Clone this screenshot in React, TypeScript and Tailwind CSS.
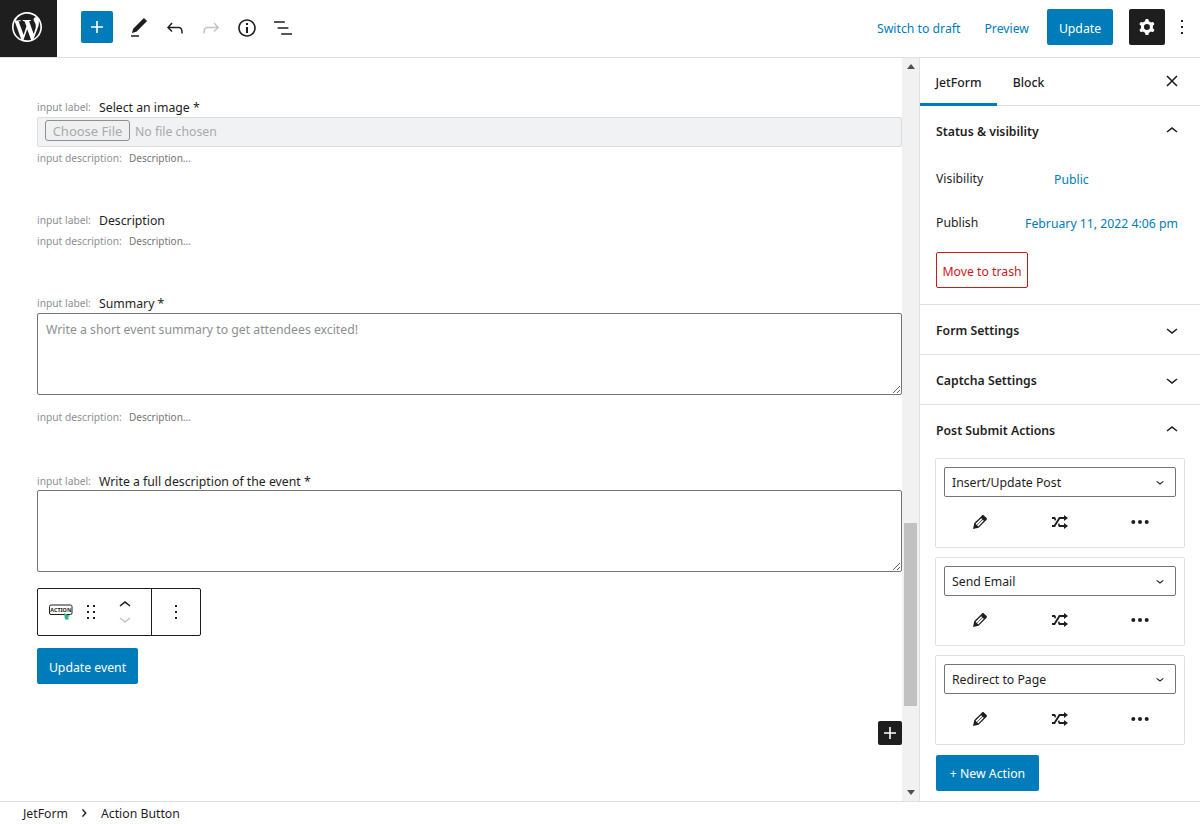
import React from "react";

const P = {
  plus: "M18 11.2h-5.2V6h-1.6v5.2H6v1.6h5.2V18h1.6v-5.2H18z",
  undo: "M18.3 11.7c-.6-.6-1.4-.9-2.3-.9H6.7l2.9-3.3-1.1-1-4.5 5L8.5 16l1-1-2.7-2.7H16c.5 0 .9.2 1.3.5 1 1 1 3.4 1 4.5v.3h1.5v-.2c0-1.5 0-4.3-1.5-5.7z",
  redo: "M15.6 6.5l-1.1 1 2.9 3.3H8c-.9 0-1.7.3-2.3.9-1.4 1.5-1.4 4.2-1.4 5.6v.2h1.5v-.3c0-1.1 0-3.5 1-4.5.3-.3.7-.5 1.3-.5h9.2L14.5 15l1.1 1.1 4.6-4.6-4.6-5z",
  info: "M12 3.2c-4.8 0-8.8 3.9-8.8 8.8 0 4.8 3.9 8.8 8.8 8.8 4.8 0 8.8-3.9 8.8-8.8 0-4.8-4-8.8-8.8-8.8zm0 16c-4 0-7.2-3.3-7.2-7.2C4.8 8 8 4.8 12 4.8s7.2 3.3 7.2 7.2c0 4-3.2 7.2-7.2 7.2zM11 17h2v-6h-2v6zm0-8h2V7h-2v2z",
  list: "M13.8 5.2H3v1.5h10.8V5.2zm-3.6 12v1.5H21v-1.5H10.2zm7.2-6H6.6v1.5h10.8v-1.5z",
  pen: "M20.1 5.1L16.9 2 6.2 12.7l-1.3 4.4 4.5-1.3L20.1 5.1zM4 20.8h8v-1.5H4v1.5z",
  cog: "M10.289 4.836A1 1 0 0111.275 4h1.306a1 1 0 01.987.836l.244 1.466c.787.26 1.503.679 2.108 1.218l1.393-.522a1 1 0 011.216.437l.653 1.13a1 1 0 01-.23 1.273l-1.148.944a6.025 6.025 0 010 2.435l1.149.946a1 1 0 01.23 1.272l-.653 1.13a1 1 0 01-1.216.437l-1.394-.522c-.605.54-1.32.958-2.108 1.218l-.244 1.466a1 1 0 01-.987.836h-1.306a1 1 0 01-.986-.836l-.244-1.466a5.995 5.995 0 01-2.108-1.218l-1.394.522a1 1 0 01-1.217-.436l-.653-1.131a1 1 0 01.23-1.272l1.149-.946a6.026 6.026 0 010-2.435l-1.148-.944a1 1 0 01-.23-1.272l.653-1.131a1 1 0 011.217-.437l1.393.522a5.994 5.994 0 012.108-1.218l.244-1.466zM14.929 12a3 3 0 11-6 0 3 3 0 016 0z",
  more: "M13 19h-2v-2h2v2zm0-6h-2v-2h2v2zm0-6h-2V5h2v2z",
  up: "M6.5 12.4L12 8l5.5 4.4-.9 1.2L12 10l-4.5 3.6-1-1.2z",
  down: "M17.5 11.6L12 16l-5.5-4.4.9-1.2L12 14l4.5-3.6 1 1.2z",
  drag: "M8 7h2V5H8v2zm0 6h2v-2H8v2zm0 6h2v-2H8v2zm6-14v2h2V5h-2zm0 8h2v-2h-2v2zm0 6h2v-2h-2v2z",
};

const WP = "M20 10c0-5.51-4.49-10-10-10C4.48 0 0 4.49 0 10c0 5.52 4.48 10 10 10 5.51 0 10-4.48 10-10zM7.78 15.37L4.37 6.22c.55-.02 1.17-.08 1.17-.08.5-.06.44-.67-.06-.64 0 0-1.45.11-2.37.11-.18 0-.37 0-.58-.01C4.12 2.69 6.87 1.11 10 1.11c2.33 0 4.45.87 6.05 2.34-.68-.11-1.65.39-1.65 1.58 0 .74.45 1.36.9 2.1.35.61.55 1.36.55 2.46 0 1.49-1.4 5-1.4 5l-3.03-8.37c.54-.02.82-.17.82-.17.5-.05.44-.79-.06-.76 0 0-1.44.12-2.38.12-.87 0-2.33-.12-2.33-.12-.5-.03-.56.73-.06.76l.92.08 1.26 3.41zM17.41 10c.24-.64.74-1.87.43-4.25.7 1.29 1.05 2.71 1.05 4.25 0 3.29-1.73 6.24-4.4 7.78.97-2.59 1.94-5.2 2.92-7.78zM6.1 18.09C3.12 16.65 1.11 13.53 1.11 10c0-1.3.23-2.48.72-3.59C3.25 10.3 4.67 14.2 6.1 18.09zm4.03-6.63l2.58 6.98c-.86.29-1.76.45-2.71.45-.79 0-1.57-.11-2.29-.33.81-2.38 1.62-4.74 2.42-7.1z";

function Icon({ d, className = "", size = 24 }: { d: string; className?: string; size?: number }) {
  return (
    <svg viewBox="0 0 24 24" width={size} height={size} className={"fill-current shrink-0 " + className}>
      <path d={d} fillRule="evenodd" clipRule="evenodd" />
    </svg>
  );
}

function Label({ text }: { text: string }) {
  return (
    <div className="flex items-center h-5 pt-[1px]">
      <span className="text-[10.25px] text-[#8c8f94] w-[62px]">input label:</span>
      <span className="text-[12.25px] text-[#1e1e1e] pt-[2px]">{text}</span>
    </div>
  );
}

function Desc() {
  return (
    <div className="flex items-center h-5 pt-[1px]">
      <span className="text-[10.25px] text-[#8c8f94] w-[92px]">input description:</span>
      <span className="text-[10px] text-[#757575]">Description...</span>
    </div>
  );
}

function Panel({ title, open, children }: { title: string; open?: boolean; children?: React.ReactNode }) {
  return (
    <div className="border-b border-[#e0e0e0]">
      <div className="flex items-center justify-between h-[49px] pl-4 pr-4">
        <span className="text-[12.25px] font-semibold text-[#1e1e1e] pt-[3px]">{title}</span>
        <Icon d={open ? P.up : P.down} className="text-[#1e1e1e]" />
      </div>
      {children}
    </div>
  );
}

function ActionCard({ name, compact }: { name: string; compact?: boolean }) {
  return (
    <div className={"border border-[#e0e0e0] rounded-[2px] px-2 pt-2 mb-[9px] " + (compact ? "h-[89px]" : "h-[90px]")}>
      <div className="h-[30px] border border-[#757575] rounded-[2px] flex items-center justify-between pl-[7px] pr-[7px] text-[12.25px] text-[#1e1e1e]">
        <span className="pt-[2px]">{name}</span>
        <Icon d={P.down} size={16} />
      </div>
      <div className={"flex justify-center gap-[60px] items-center h-[20px] text-[#1e1e1e] " + (compact ? "mt-[14px]" : "mt-[15px]")}>
        <svg viewBox="0 0 20 20" width="20" height="20" className="fill-current">
          <path d="M13.89 3.39l2.71 2.72c.46.46.42 1.24.03 1.64l-8.01 8.02-5.56 1.16 1.16-5.58s7.6-7.63 7.99-8.03c.39-.39 1.22-.39 1.68.07zm-2.73 2.79l-5.59 5.61 1.11 1.11 5.54-5.65zm-2.97 8.23l5.58-5.6-1.07-1.08-5.59 5.6z" />
        </svg>
        <svg viewBox="0 0 20 20" width="20" height="20" className="fill-current">
          <path d="M18 6.01L14 9V7h-4l-5 8H2v-2h2l5-8h5V3zM2 5h3l1.15 2.17-1.12 1.8L4 7H2V5zm16 9.01L14 17v-2H9l-1.15-2.17 1.12-1.8L10 13h4v-2z" />
        </svg>
        <svg viewBox="0 0 20 20" width="20" height="20" className="fill-current">
          <circle cx="3.3" cy="10" r="2" />
          <circle cx="10" cy="10" r="2" />
          <circle cx="16.7" cy="10" r="2" />
        </svg>
      </div>
    </div>
  );
}

export default function App() {
  return (
    <div className="w-[1200px] h-[824px] overflow-hidden flex flex-col bg-white text-[#1e1e1e] font-['Noto_Sans','Open_Sans',sans-serif]">
      {/* Header */}
      <header className="h-[58px] shrink-0 flex items-center border-b border-[#e0e0e0] pb-[3px]">
        <div className="w-[57px] h-[57px] self-start bg-[#1e1e1e] flex items-center justify-center text-white pr-[3px] pb-[3px]">
          <svg viewBox="0 0 20 20" width="30" height="30" className="fill-current">
            <path d={WP} />
          </svg>
        </div>
        <button className="ml-6 w-8 h-8 rounded-[2px] bg-[#007cba] text-white flex items-center justify-center">
          <Icon d={P.plus} />
        </button>
        <div className="flex items-center ml-[14px] gap-3 pt-[1px]">
          <Icon d={P.pen} />
          <Icon d={P.undo} />
          <Icon d={P.redo} className="text-[#c4c4c4]" />
          <Icon d={P.info} />
          <Icon d={P.list} />
        </div>
        <div className="ml-auto flex items-center">
          <span className="text-[12.25px] text-[#007cba] pt-[4px]">Switch to draft</span>
          <span className="text-[12.25px] text-[#007cba] ml-6 pt-[4px]">Preview</span>
          <button className="ml-[18px] w-[66px] h-[36px] rounded-[2px] bg-[#007cba] text-white text-[12.25px] pt-[4px]">Update</button>
          <button className="ml-4 w-9 h-9 rounded-[2px] bg-[#1e1e1e] text-white flex items-center justify-center">
            <Icon d={P.cog} />
          </button>
          <Icon d={P.more} className="ml-[5px] mr-[6px]" />
        </div>
      </header>

      {/* Body */}
      <div className="flex-1 min-h-0 flex">
        <main className="flex-1 min-w-0 relative pt-[39px] pl-[37px]">
          <Label text="Select an image *" />
          <input
            type="file"
            disabled
            className="block w-full h-[30px] border border-[#dcdcde] rounded-[2px] bg-[#f1f2f3] px-[7px] py-[2px] text-[12.25px] leading-[21px] text-[#a7aaad] file:h-[21px] file:mr-[5px] file:w-[85px] file:border file:border-[#8c8f94] file:rounded-[3px] file:bg-[#f0f0f0] file:text-[#a7aaad] file:text-[13px] file:leading-[18px]"
          />
          <div className="mt-[1px]">
            <Desc />
          </div>
          <div className="mt-[42px]">
            <Label text="Description" />
          </div>
          <div className="mt-[1px]">
            <Desc />
          </div>
          <div className="mt-[42px]">
            <Label text="Summary *" />
          </div>
          <textarea
            readOnly
            placeholder="Write a short event summary to get attendees excited!"
            className="block w-full h-[82px] border border-[#757575] rounded-[2px] px-2 py-[7px] text-[12.25px] placeholder:text-[#8c8f94] outline-none"
          />
          <div className="mt-3">
            <Desc />
          </div>
          <div className="mt-[44px]">
            <Label text="Write a full description of the event *" />
          </div>
          <textarea
            readOnly
            className="block w-full h-[82px] -mt-[1px] border border-[#757575] rounded-[2px] outline-none"
          />
          <div className="mt-4 w-[164px] h-[48px] border border-[#1e1e1e] rounded-[2px] flex">
            <div className="w-[114px] border-r border-[#1e1e1e] flex items-center pl-[11px]">
              <svg viewBox="0 0 24 16" width="24" height="16">
                <rect x="0.5" y="1" width="22.5" height="9.5" rx="1.5" fill="#fff" stroke="#1e1e1e" />
                <text x="11.8" y="8" fontSize="5.4" fontWeight="700" textAnchor="middle" fill="#1e1e1e">ACTION</text>
                <path d="M15 9l6 3-2 1 1 2.5h-4z" fill="#2fb38c" />
              </svg>
              <Icon d={P.drag} className="ml-[6px]" />
              <div className="ml-[10px] flex flex-col items-center">
                <Icon d={P.up} className="-mb-[5px]" />
                <Icon d={P.down} className="text-[#c4c4c4] -mt-[5px]" />
              </div>
            </div>
            <div className="flex-1 flex items-center justify-center">
              <Icon d={P.more} />
            </div>
          </div>
          <button className="mt-3 block w-[101px] h-9 rounded-[2px] bg-[#007cba] text-white text-[12.25px] pt-[4px]">Update event</button>
          <button className="absolute right-0 top-[663px] w-6 h-6 rounded-[2px] bg-[#1e1e1e] text-white flex items-center justify-center">
            <Icon d={P.plus} />
          </button>
        </main>

        {/* Scrollbar */}
        <div className="w-[17px] shrink-0 bg-[#f1f1f1] flex flex-col items-center pt-[6px] pb-[6px]">
          <div className="w-0 h-0 border-x-[4px] border-x-transparent border-b-[5px] border-b-[#505050]" />
          <div className="h-[454px] shrink-0" />
          <div className="w-[13px] h-[183px] shrink-0 bg-[#c1c1c1]" />
          <div className="flex-1" />
          <div className="w-0 h-0 border-x-[4px] border-x-transparent border-t-[5px] border-t-[#505050]" />
        </div>

        {/* Sidebar */}
        <aside className="w-[281px] shrink-0 border-l border-[#e0e0e0] overflow-hidden">
          <div className="h-[48px] border-b border-[#e0e0e0] flex items-stretch text-[12.25px]">
            <div className="w-[77px] flex items-center justify-center font-medium border-b-[3px] border-[#007cba] h-[48px] pt-[5px]">JetForm</div>
            <div className="w-[63px] flex items-center justify-center font-medium pt-[3px]">Block</div>
            <svg viewBox="0 0 12 12" width="12" height="12" className="ml-auto mr-[22px] self-center stroke-[#1e1e1e] -mt-[1px]" strokeWidth="1.6">
              <path d="M1 1l10 10M11 1L1 11" fill="none" />
            </svg>
          </div>
          <Panel title="Status & visibility" open>
            <div className="h-[149px] px-4 pt-[14px]">
              <div className="flex items-center h-5 text-[12.25px]">
                <span className="w-[118px]">Visibility</span>
                <span className="text-[#007cba] pt-[2px]">Public</span>
              </div>
              <div className="flex items-center justify-between h-5 mt-[25px] text-[12.25px]">
                <span className="-mt-[1px]">Publish</span>
                <span className="text-[#007cba] pr-[6px]">February 11, 2022 4:06 pm</span>
              </div>
              <button className="mt-[18px] block w-[92px] h-9 border border-[#cc1818] rounded-[2px] text-[#cc1818] text-[12.25px] pt-[5px]">Move to trash</button>
            </div>
          </Panel>
          <Panel title="Form Settings" />
          <Panel title="Captcha Settings" />
          <div className="flex items-center justify-between h-[53px] px-4 pb-[3px]">
            <span className="text-[12.25px] font-semibold pt-[3px]">Post Submit Actions</span>
            <Icon d={P.up} />
          </div>
          <div className="px-[15px]">
            <ActionCard name="Insert/Update Post" />
            <ActionCard name="Send Email" compact />
            <ActionCard name="Redirect to Page" />
            <button className="ml-[1px] mt-[1px] w-[103px] h-9 rounded-[2px] bg-[#007cba] text-white text-[12.25px] pt-[2px]">+ New Action</button>
          </div>
        </aside>
      </div>

      {/* Footer */}
      <footer className="h-[23px] shrink-0 border-t border-[#e0e0e0] flex items-center pl-[23px] text-[12.25px]">
        <span className="pt-[3px]">JetForm</span>
        <svg viewBox="0 0 24 24" width="16" height="16" className="fill-current ml-[8px] mr-[9px]">
          <path d="M10.6 6L8.8 7.3l4.4 4.7-4.4 4.7 1.8 1.3 5.4-6z" />
        </svg>
        <span className="pt-[3px]">Action Button</span>
      </footer>
    </div>
  );
}
